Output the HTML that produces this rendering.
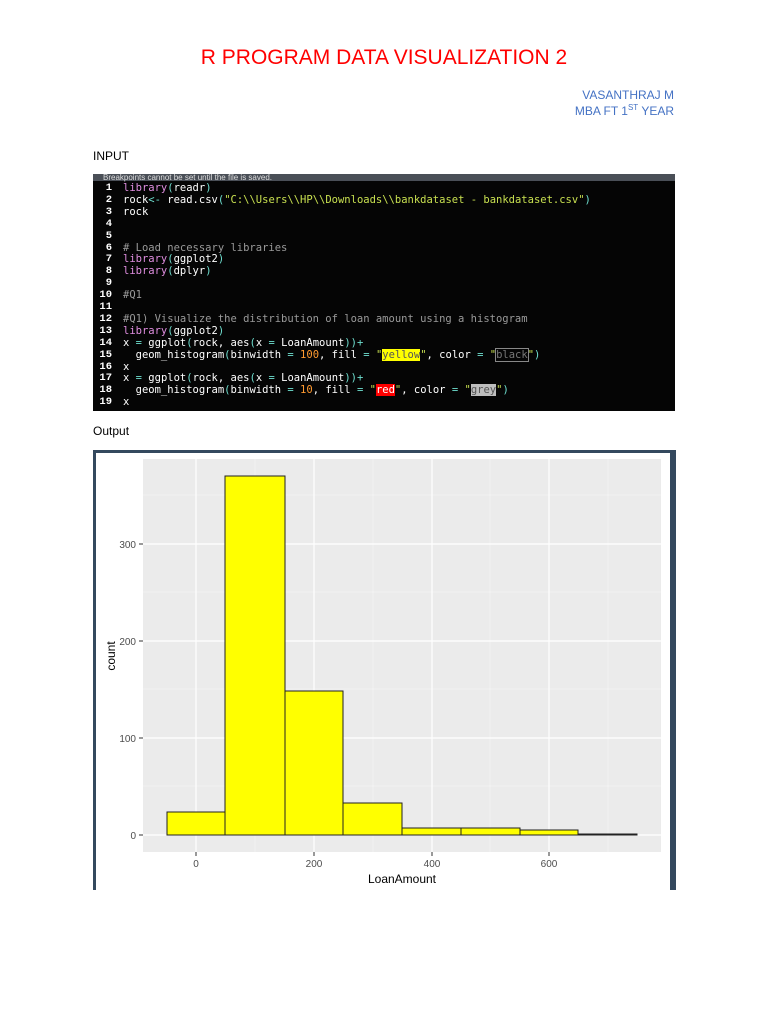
<!DOCTYPE html>
<html><head><meta charset="utf-8"><style>
body{margin:0;background:#fff;width:768px;height:1024px;position:relative;font-family:"Liberation Sans",sans-serif;overflow:hidden}
.abs{position:absolute}
.code{left:93px;top:174px;width:582px;height:237px;background:#050505;overflow:hidden}
.ban{left:0;top:0;width:582px;height:7px;background:#4a4f57;color:#ddd;font-size:8px;line-height:7px;padding-left:10px;box-sizing:border-box}
.ln{position:absolute;left:0;width:19px;text-align:right;color:#fff;font-weight:bold;font-family:"Liberation Mono",monospace;font-size:10.5px}
.cd{position:absolute;left:30px;white-space:pre;font-family:"DejaVu Sans Mono","Liberation Mono",monospace;font-size:10.5px;color:#fff}
.k{color:#e08ee0}.p{color:#6fe0d0}.s{color:#c8e050}.c{color:#9a9a9a}.n{color:#ff9a30}
</style></head><body>
<div class="abs" style="left:0;width:768px;top:46px;text-align:center;color:#ff0000;font-size:21px">R PROGRAM DATA VISUALIZATION 2</div>
<div class="abs" style="right:94px;top:87px;text-align:right;color:#4472c4;font-size:12px;line-height:16px">VASANTHRAJ M<br>MBA FT 1<sup style="font-size:8px;line-height:0">ST</sup> YEAR</div>
<div class="abs" style="left:93px;top:149px;font-size:12px">INPUT</div>
<div class="abs code">
<div class="abs ban">Breakpoints cannot be set until the file is saved.</div>
<div id="lines"></div>
</div>
<div class="abs" style="left:93px;top:424px;font-size:12px">Output</div>
<svg class="abs" style="left:0;top:0" width="768" height="1024">
<rect x="93" y="450" width="583" height="440" fill="#fff"/>
<rect x="93" y="450" width="583" height="3" fill="#34495e"/>
<rect x="93" y="450" width="3" height="440" fill="#34495e"/>
<rect x="670" y="450" width="6" height="440" fill="#34495e"/>
<rect x="143" y="459" width="518" height="393" fill="#ebebeb"/>
<g stroke="#f7f7f7" stroke-width="0.6">
<line x1="255" y1="459" x2="255" y2="852"/><line x1="373" y1="459" x2="373" y2="852"/><line x1="490" y1="459" x2="490" y2="852"/><line x1="608" y1="459" x2="608" y2="852"/>
<line x1="143" y1="495" x2="661" y2="495"/><line x1="143" y1="592" x2="661" y2="592"/><line x1="143" y1="689" x2="661" y2="689"/><line x1="143" y1="786" x2="661" y2="786"/>
</g>
<g stroke="#fff" stroke-width="1.2">
<line x1="196" y1="459" x2="196" y2="852"/><line x1="314" y1="459" x2="314" y2="852"/><line x1="432" y1="459" x2="432" y2="852"/><line x1="549" y1="459" x2="549" y2="852"/>
<line x1="143" y1="544" x2="661" y2="544"/><line x1="143" y1="641" x2="661" y2="641"/><line x1="143" y1="738" x2="661" y2="738"/><line x1="143" y1="835" x2="661" y2="835"/>
</g>
<g fill="#ffff00" stroke="#222" stroke-width="1">
<rect x="167" y="812" width="58" height="23"/>
<rect x="225" y="476" width="60" height="359"/>
<rect x="285" y="691" width="58" height="144"/>
<rect x="343" y="803" width="59" height="32"/>
<rect x="402" y="828" width="59" height="7"/>
<rect x="461" y="828" width="59" height="7"/>
<rect x="520" y="830" width="58" height="5"/>
<rect x="578" y="834" width="59" height="1"/>
</g>
<g fill="#4d4d4d" font-size="10" font-family="Liberation Sans">
<text x="136" y="548" text-anchor="end">300</text><text x="136" y="645" text-anchor="end">200</text><text x="136" y="742" text-anchor="end">100</text><text x="136" y="839" text-anchor="end">0</text>
<text x="196" y="867" text-anchor="middle">0</text><text x="314" y="867" text-anchor="middle">200</text><text x="432" y="867" text-anchor="middle">400</text><text x="549" y="867" text-anchor="middle">600</text>
</g>
<g stroke="#333"><line x1="139" y1="544" x2="143" y2="544"/><line x1="139" y1="641" x2="143" y2="641"/><line x1="139" y1="738" x2="143" y2="738"/><line x1="139" y1="835" x2="143" y2="835"/>
<line x1="196" y1="852" x2="196" y2="856"/><line x1="314" y1="852" x2="314" y2="856"/><line x1="432" y1="852" x2="432" y2="856"/><line x1="549" y1="852" x2="549" y2="856"/></g>
<text x="402" y="883" text-anchor="middle" font-size="12" font-family="Liberation Sans">LoanAmount</text>
<text transform="translate(115,656) rotate(-90)" text-anchor="middle" font-size="12" font-family="Liberation Sans">count</text>
</svg>
<script>
var L=[
'<span class="k">library</span><span class="p">(</span>readr<span class="p">)</span>',
'rock<span class="p">&lt;-</span> read.csv<span class="p">(</span><span class="s">"C:\\\\Users\\\\HP\\\\Downloads\\\\bankdataset - bankdataset.csv"</span><span class="p">)</span>',
'rock','','',
'<span class="c"># Load necessary libraries</span>',
'<span class="k">library</span><span class="p">(</span>ggplot2<span class="p">)</span>',
'<span class="k">library</span><span class="p">(</span>dplyr<span class="p">)</span>','',
'<span class="c">#Q1</span>','',
'<span class="c">#Q1) Visualize the distribution of loan amount using a histogram</span>',
'<span class="k">library</span><span class="p">(</span>ggplot2<span class="p">)</span>',
'x <span class="p">=</span> ggplot<span class="p">(</span>rock, aes<span class="p">(</span>x <span class="p">=</span> LoanAmount<span class="p">))+</span>',
'  geom_histogram<span class="p">(</span>binwidth <span class="p">=</span> <span class="n">100</span>, fill <span class="p">=</span> <span class="s">"<span style="background:#ffff00;color:#555">yellow</span>"</span>, color <span class="p">=</span> <span class="s">"<span style="outline:1px solid #888;color:#777">black</span>"</span><span class="p">)</span>',
'x',
'x <span class="p">=</span> ggplot<span class="p">(</span>rock, aes<span class="p">(</span>x <span class="p">=</span> LoanAmount<span class="p">))+</span>',
'  geom_histogram<span class="p">(</span>binwidth <span class="p">=</span> <span class="n">10</span>, fill <span class="p">=</span> <span class="s">"<span style="background:#ff0000;color:#fff">red</span>"</span>, color <span class="p">=</span> <span class="s">"<span style="background:#bebebe;color:#555">grey</span>"</span><span class="p">)</span>',
'x'];
var h='';for(var i=0;i<L.length;i++){var t=8+i*11.9;h+='<div class="ln" style="top:'+t+'px">'+(i+1)+'</div><div class="cd" style="top:'+t+'px">'+L[i]+'</div>';}
document.getElementById('lines').innerHTML=h;
</script>
</body></html>
